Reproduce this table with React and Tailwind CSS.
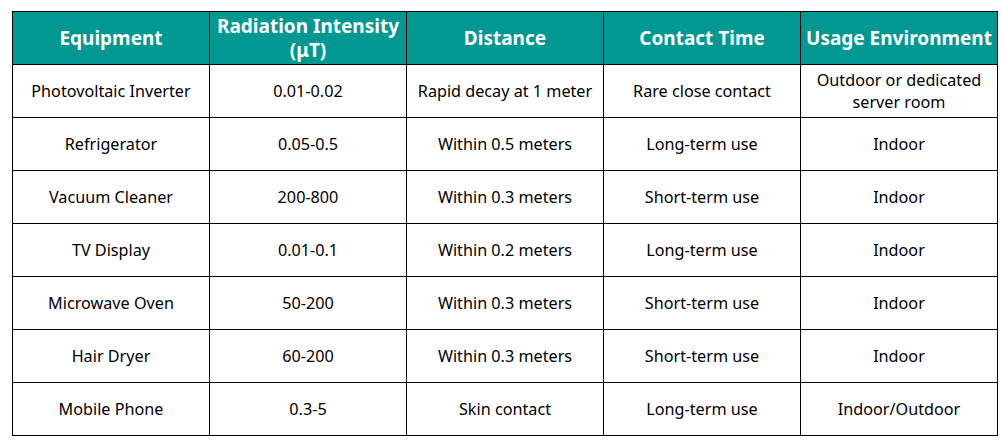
import React from "react";

const rows = [
  ["Photovoltaic Inverter", "0.01-0.02", "Rapid decay at 1 meter", "Rare close contact", "Outdoor or dedicated server room"],
  ["Refrigerator", "0.05-0.5", "Within 0.5 meters", "Long-term use", "Indoor"],
  ["Vacuum Cleaner", "200-800", "Within 0.3 meters", "Short-term use", "Indoor"],
  ["TV Display", "0.01-0.1", "Within 0.2 meters", "Long-term use", "Indoor"],
  ["Microwave Oven", "50-200", "Within 0.3 meters", "Short-term use", "Indoor"],
  ["Hair Dryer", "60-200", "Within 0.3 meters", "Short-term use", "Indoor"],
  ["Mobile Phone", "0.3-5", "Skin contact", "Long-term use", "Indoor/Outdoor"],
];

const headers = ["Equipment", "Radiation Intensity (μT)", "Distance", "Contact Time", "Usage Environment"];

const App = () => {
  return (
    <main className="w-[1003px] h-[446px] bg-white pt-[11px] pl-[12px] font-['Noto_Sans',sans-serif]">
      <table className="border-collapse table-fixed w-[986px]">
        <thead>
          <tr className="h-[53px] bg-[#009891]">
            {headers.map((h) => (
              <th
                key={h}
                className="w-[197px] border-[1.5px] border-black px-1 text-white text-[19px] font-bold leading-[24px] text-center"
              >
                {h}
              </th>
            ))}
          </tr>
        </thead>
        <tbody>
          {rows.map((row) => (
            <tr key={row[0]} className="h-[53px]">
              {row.map((cell, i) => (
                <td
                  key={i}
                  className="border-[1.5px] border-black px-2 text-center text-[16.2px] leading-[22px] text-black"
                >
                  {cell}
                </td>
              ))}
            </tr>
          ))}
        </tbody>
      </table>
    </main>
  );
};

export default App;
